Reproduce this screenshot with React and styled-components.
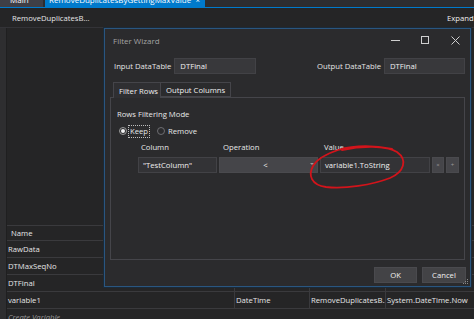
import React from "react";
import styled, { createGlobalStyle } from "styled-components";

const GlobalStyle = createGlobalStyle`
  html, body { margin: 0; padding: 0; background: #252526; }
  body { font-family: "Open Sans", "Noto Sans", sans-serif; font-size: 7.7px; color: #e6e6e6; }
  * { box-sizing: border-box; }
`;

const Root = styled.div`
  position: relative;
  width: 474px;
  height: 319px;
  overflow: hidden;
  display: flex;
  flex-direction: column;
  background: #252526;
`;

const TabStrip = styled.div`
  flex: none;
  height: 8px;
  display: flex;
  align-items: flex-end;
  gap: 2px;
  overflow: hidden;
  background: #2d2d30;
  border-bottom: 1px solid #007acc;
`;

const DocTab = styled.div`
  flex: none;
  height: 15px;
  width: ${(p) => p.$w}px;
  display: flex;
  align-items: center;
  justify-content: space-between;
  padding: 0 5px 0 ${(p) => p.$pl}px;
  background: ${(p) => (p.$active ? "#007acc" : "#3f3f46")};
  color: #ffffff;
  font-size: 8px;
  white-space: nowrap;
  overflow: hidden;
`;

const Breadcrumb = styled.div`
  flex: none;
  height: 20px;
  display: flex;
  align-items: center;
  justify-content: space-between;
  padding: 0 0 0 12px;
  background: #252526;
  border-bottom: 1px solid #333337;
  white-space: nowrap;
  overflow: hidden;
`;

const ExpandLink = styled.span`
  width: 27px;
  overflow: hidden;
  color: #f0f0f0;
`;

const Workspace = styled.div`
  flex: 1;
  display: flex;
  min-height: 0;
`;

const SideStrip = styled.div`
  flex: none;
  width: 7px;
  background: #2e2e30;
  border-right: 1px solid #1f1f20;
`;

const Main = styled.div`
  flex: 1;
  display: flex;
  flex-direction: column;
  min-width: 0;
`;

const Canvas = styled.div`
  flex: none;
  height: 197px;
  background: #252526;
`;

const VarTable = styled.div`
  flex: 1;
  display: grid;
  grid-template-columns: 227px 75px 76px 1fr;
  grid-auto-rows: 17px;
  grid-template-rows: 15px;
  border-top: 1px solid #3a3a3d;
  background: #252526;
`;

const Cell = styled.div`
  display: flex;
  align-items: center;
  padding-left: ${(p) => (p.$head ? 4 : 1)}px;
  border-bottom: 1px solid #3a3a3d;
  border-left: ${(p) => (p.$first ? "none" : "1px solid #3a3a3d")};
  white-space: nowrap;
  overflow: hidden;
  color: ${(p) => (p.$muted ? "#9a9a9a" : "#e6e6e6")};
  font-style: ${(p) => (p.$muted ? "italic" : "normal")};
`;

/* ---------- Dialog ---------- */

const Dialog = styled.div`
  position: absolute;
  left: 104px;
  top: 28px;
  width: 367px;
  height: 259px;
  display: flex;
  flex-direction: column;
  background: #2b2b2d;
  border: 1px solid #2a5680;
  box-shadow: 0 0 0 1px #1b2a38;
`;

const TitleBar = styled.div`
  flex: none;
  height: 22px;
  display: flex;
  align-items: center;
  padding-left: 8px;
`;

const Title = styled.span`
  flex: 1;
  color: #a3a3a3;
  font-size: 8px;
`;

const WinBtn = styled.div`
  width: 30px;
  height: 22px;
  display: flex;
  align-items: center;
  justify-content: center;
`;

const Body = styled.div`
  flex: 1;
  display: flex;
  flex-direction: column;
  padding: 7px 5px 3px 5px;
  min-height: 0;
`;

const FieldsRow = styled.div`
  display: flex;
  justify-content: space-between;
  height: 16px;
`;

const Field = styled.div`
  display: flex;
  align-items: center;
  gap: 3px;
  padding-left: ${(p) => p.$pl || 0}px;
`;

const TextBox = styled.div`
  width: ${(p) => p.$w}px;
  height: 16px;
  display: flex;
  align-items: center;
  padding-left: 5px;
  background: ${(p) => p.$bg || "#38383b"};
  border: 1px solid #424246;
  color: #f0f0f0;
  white-space: nowrap;
  overflow: hidden;
`;

const TabRow = styled.div`
  display: flex;
  margin-top: 8px;
  padding-left: 3px;
  height: 15px;
  align-items: flex-start;
  position: relative;
  z-index: 1;
`;

const Tab = styled.div`
  width: ${(p) => p.$w}px;
  height: ${(p) => (p.$sel ? 16 : 15)}px;
  display: flex;
  align-items: center;
  padding-left: 5px;
  background: ${(p) => (p.$sel ? "#2f2f32" : "#2b2b2d")};
  border: 1px solid #45454a;
  border-bottom: ${(p) => (p.$sel ? "none" : "1px solid #45454a")};
  border-left: ${(p) => (p.$noLeft ? "none" : "1px solid #45454a")};
  color: #f0f0f0;
  white-space: nowrap;
`;

const Panel = styled.div`
  flex: none;
  height: 163px;
  display: flex;
  flex-direction: column;
  padding: 10px 6px 0 6px;
  border: 1px solid #45454a;
  background: #2b2b2d;
`;

const SectionTitle = styled.div`
  height: 12px;
  line-height: 12px;
  color: #e8e8e8;
`;

const RadioRow = styled.div`
  display: flex;
  align-items: center;
  height: 14px;
  margin-top: 4px;
  padding-left: 2px;
  gap: 1px;
`;

const RadioCircle = styled.span`
  width: 8px;
  height: 8px;
  border-radius: 50%;
  border: 1px solid ${(p) => (p.$on ? "#9b9b9b" : "#6e6e72")};
  background: #2b2b2d;
  display: flex;
  align-items: center;
  justify-content: center;
  &::after {
    content: "";
    width: 4px;
    height: 4px;
    border-radius: 50%;
    background: ${(p) => (p.$on ? "#f2f2f2" : "transparent")};
  }
`;

const RadioLabel = styled.span`
  padding: 0 1px;
  height: 13px;
  display: flex;
  align-items: center;
  border: 1px dotted ${(p) => (p.$focus ? "#bdbdbd" : "transparent")};
  margin-right: ${(p) => p.$mr || 0}px;
  color: #e8e8e8;
`;

const Grid = styled.div`
  display: grid;
  grid-template-columns: 79px 99px 110px 12px 13px;
  column-gap: 2px;
  margin-left: 21px;
  margin-top: ${(p) => p.$mt}px;
  height: ${(p) => p.$h}px;
`;

const HeadCell = styled.div`
  display: flex;
  align-items: center;
  padding-left: ${(p) => p.$pl || 3}px;
  color: #e8e8e8;
`;

const InputCell = styled.div`
  display: flex;
  align-items: center;
  justify-content: ${(p) => (p.$center ? "center" : "flex-start")};
  padding-left: ${(p) => (p.$center ? 0 : 4)}px;
  padding-right: ${(p) => p.$pr || 0}px;
  position: relative;
  background: ${(p) => p.$bg};
  border: 1px solid ${(p) => p.$bd || "#424246"};
  color: ${(p) => p.$fg || "#f0f0f0"};
  white-space: nowrap;
  overflow: hidden;
  font-size: ${(p) => p.$fs || 7.7}px;
`;

const ComboArrow = styled.span`
  position: absolute;
  right: 3px;
  top: 5px;
  width: 0;
  height: 0;
  border-left: 2px solid transparent;
  border-right: 2px solid transparent;
  border-top: 2px solid #9a9a9a;
`;

const ButtonRow = styled.div`
  display: flex;
  justify-content: flex-end;
  gap: 5px;
  margin-top: 7px;
  margin-right: -1px;
`;

const Button = styled.div`
  width: ${(p) => p.$w}px;
  height: 16px;
  display: flex;
  align-items: center;
  justify-content: center;
  background: #434346;
  border: 1px solid #4a4a4e;
  color: #f0f0f0;
`;

const Grip = styled.svg`
  position: absolute;
  right: 1px;
  bottom: 1px;
`;

const Annotation = styled.svg`
  position: absolute;
  left: 0;
  top: 0;
  pointer-events: none;
`;

const rows = [
  ["RawData", "DataTable", "RemoveDuplicatesB...", "New DataTable"],
  ["DTMaxSeqNo", "DataTable", "RemoveDuplicatesB...", ""],
  ["DTFinal", "DataTable", "RemoveDuplicatesB...", "New DataTable"],
  ["variable1", "DateTime", "RemoveDuplicatesB...", "System.DateTime.Now"],
];

export default function App() {
  return (
    <>
      <GlobalStyle />
      <Root>
        <TabStrip>
          <DocTab $w={43} $pl={10}>Main</DocTab>
          <DocTab $w={160} $pl={4} $active>
            <span>RemoveDuplicatesByGettingMaxValue</span>
            <span>×</span>
          </DocTab>
        </TabStrip>
        <Breadcrumb>
          <span>RemoveDuplicatesB...</span>
          <ExpandLink>Expand All</ExpandLink>
        </Breadcrumb>
        <Workspace>
          <SideStrip />
          <Main>
            <Canvas />
            <VarTable>
              <Cell $first $head>Name</Cell>
              <Cell $head>Variable type</Cell>
              <Cell $head>Scope</Cell>
              <Cell $head>Default</Cell>
              {rows.map((r) =>
                r.map((c, i) => (
                  <Cell key={r[0] + i} $first={i === 0}>
                    {c}
                  </Cell>
                ))
              )}
              <Cell $first $muted>Create Variable</Cell>
            </VarTable>
          </Main>
        </Workspace>

        <Dialog>
          <TitleBar>
            <Title>Filter Wizard</Title>
            <WinBtn>
              <svg width="9" height="9" viewBox="0 0 9 9">
                <line x1="0" y1="4.5" x2="9" y2="4.5" stroke="#cfcfcf" strokeWidth="1" />
              </svg>
            </WinBtn>
            <WinBtn>
              <svg width="8" height="8" viewBox="0 0 8 8">
                <rect x="0.5" y="0.5" width="7" height="7" fill="none" stroke="#cfcfcf" strokeWidth="1" />
              </svg>
            </WinBtn>
            <WinBtn>
              <svg width="9" height="9" viewBox="0 0 9 9">
                <path d="M0.5 0.5 L8.5 8.5 M8.5 0.5 L0.5 8.5" stroke="#cfcfcf" strokeWidth="1" />
              </svg>
            </WinBtn>
          </TitleBar>
          <Body>
            <FieldsRow>
              <Field $pl={4}>
                <span>Input DataTable</span>
                <TextBox $w={82}>DTFinal</TextBox>
              </Field>
              <Field>
                <span>Output DataTable</span>
                <TextBox $w={81}>DTFinal</TextBox>
              </Field>
            </FieldsRow>
            <TabRow>
              <Tab $w={48} $sel>Filter Rows</Tab>
              <Tab $w={70} $noLeft>Output Columns</Tab>
            </TabRow>
            <Panel>
              <SectionTitle>Rows Filtering Mode</SectionTitle>
              <RadioRow>
                <RadioCircle $on />
                <RadioLabel $focus $mr={6}>Keep</RadioLabel>
                <RadioCircle />
                <RadioLabel>Remove</RadioLabel>
              </RadioRow>
              <Grid $mt={3} $h={12}>
                <HeadCell>Column</HeadCell>
                <HeadCell $pl={4}>Operation</HeadCell>
                <HeadCell $pl={4}>Value</HeadCell>
                <span />
                <span />
              </Grid>
              <Grid $mt={4} $h={16}>
                <InputCell $bg="#333336">"TestColumn"</InputCell>
                <InputCell $bg="#454549" $bd="#4a4a4e" $center $pr={6}>
                  &lt;
                  <ComboArrow />
                </InputCell>
                <InputCell $bg="#333336">variable1.ToString</InputCell>
                <InputCell $bg="#454549" $bd="#4a4a4e" $center $fg="#9a9a9a" $fs={6}>
                  ×
                </InputCell>
                <InputCell $bg="#454549" $bd="#4a4a4e" $center $fg="#9a9a9a" $fs={6}>
                  +
                </InputCell>
              </Grid>
            </Panel>
            <ButtonRow>
              <Button $w={43}>OK</Button>
              <Button $w={44}>Cancel</Button>
            </ButtonRow>
          </Body>
          <Grip width="7" height="7" viewBox="0 0 7 7">
            {[
              [5, 1],
              [3, 3],
              [5, 3],
              [1, 5],
              [3, 5],
              [5, 5],
            ].map(([x, y]) => (
              <rect key={x + "-" + y} x={x} y={y} width="1" height="1" fill="#8a8a8a" />
            ))}
          </Grip>
        </Dialog>

        <Annotation width="474" height="319" viewBox="0 0 474 319">
          <path
            d="M342 150 C 360 146, 386 145, 397 152 C 408 160, 404 172, 390 178 C 372 185, 345 189, 326 187 C 311 185, 308 175, 313 166 C 317 159, 326 154, 338 150 C 352 146, 372 145, 392 149"
            fill="none"
            stroke="#d2141b"
            strokeWidth="1.8"
            strokeLinecap="round"
          />
        </Annotation>
      </Root>
    </>
  );
}
